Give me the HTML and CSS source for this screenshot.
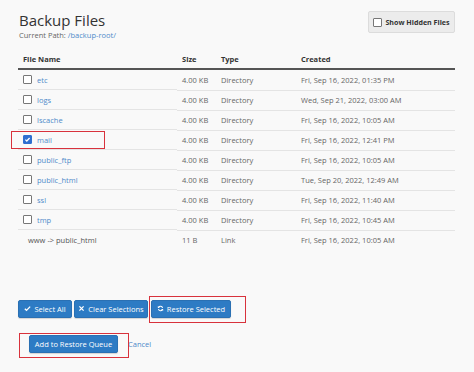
FILE: index.html
```html
<!DOCTYPE html>
<html lang="en">
<head>
    <meta charset="UTF-8">
    <title>Backup Files</title>
    <link rel="stylesheet" href="styles.css">
</head>
<body>
    <div class="page">
        <div class="top">
            <div>
                <h1>Backup Files</h1>
                <p class="path">Current Path: <a href="#">/backup-root/</a></p>
            </div>
            <button class="btn-hidden"><span class="cb"></span>Show Hidden Files</button>
        </div>

        <table class="files">
            <thead>
                <tr>
                    <th class="c-name">File Name</th>
                    <th class="c-size">Size</th>
                    <th class="c-type">Type</th>
                    <th class="c-date">Created</th>
                </tr>
            </thead>
            <tbody>
                <tr><td><span class="cb"></span><a href="#">etc</a></td><td>4.00 KB</td><td>Directory</td><td>Fri, Sep 16, 2022, 01:35 PM</td></tr>
                <tr><td><span class="cb"></span><a href="#">logs</a></td><td>4.00 KB</td><td>Directory</td><td>Wed, Sep 21, 2022, 03:00 AM</td></tr>
                <tr><td><span class="cb"></span><a href="#">lscache</a></td><td>4.00 KB</td><td>Directory</td><td>Fri, Sep 16, 2022, 10:05 AM</td></tr>
                <tr><td><span class="cb checked"><svg viewBox="0 0 10 10"><path d="M2 5.2l2 2 4-4.4" fill="none" stroke="#fff" stroke-width="1.8"/></svg></span><a href="#">mail</a></td><td>4.00 KB</td><td>Directory</td><td>Fri, Sep 16, 2022, 12:41 PM</td></tr>
                <tr><td><span class="cb"></span><a href="#">public_ftp</a></td><td>4.00 KB</td><td>Directory</td><td>Fri, Sep 16, 2022, 10:05 AM</td></tr>
                <tr><td><span class="cb"></span><a href="#">public_html</a></td><td>4.00 KB</td><td>Directory</td><td>Tue, Sep 20, 2022, 12:49 AM</td></tr>
                <tr><td><span class="cb"></span><a href="#">ssl</a></td><td>4.00 KB</td><td>Directory</td><td>Fri, Sep 16, 2022, 11:40 AM</td></tr>
                <tr><td><span class="cb"></span><a href="#">tmp</a></td><td>4.00 KB</td><td>Directory</td><td>Fri, Sep 16, 2022, 10:45 AM</td></tr>
                <tr class="link-row"><td><span class="link-name">www -&gt; public_html</span></td><td>11 B</td><td>Link</td><td>Fri, Sep 16, 2022, 10:05 AM</td></tr>
            </tbody>
        </table>

        <div class="actions">
            <button class="btn btn-all"><svg class="ico" viewBox="0 0 10 10"><path d="M1.2 5.3l2.4 2.4 5.2-5.4" fill="none" stroke="#fff" stroke-width="1.9"/></svg>Select All</button>
            <button class="btn btn-clear"><svg class="ico" viewBox="0 0 10 10"><path d="M2 2l6 6M8 2l-6 6" fill="none" stroke="#fff" stroke-width="1.9"/></svg>Clear Selections</button>
            <button class="btn btn-restore"><svg class="ico" viewBox="0 0 10 10"><path d="M8 4.2A3.2 3.2 0 0 0 2.2 3.4M2 5.8a3.2 3.2 0 0 0 5.8.8" fill="none" stroke="#fff" stroke-width="1.5"/><path d="M1.2 1.4v2.8h2.8zM8.8 8.6V5.8H6z" fill="#fff"/></svg>Restore Selected</button>
        </div>

        <div class="queue">
            <button class="btn btn-queue">Add to Restore Queue</button>
            <a href="#" class="cancel">Cancel</a>
        </div>

        <span class="mark mark-mail"></span>
        <span class="mark mark-restore"></span>
        <span class="mark mark-queue"></span>
    </div>
</body>
</html>
```

FILE: styles.css
```css
body {
    margin: 0;
    background: #f9f9f9;
    font-family: "Open Sans", Arial, sans-serif;
    font-size: 7.5px;
    color: #5a5a5a;
}

a {
    color: #4f8bc9;
    text-decoration: none;
}

.page {
    position: relative;
    padding: 10px 19px 14px 18px;
}

.top {
    display: flex;
    justify-content: space-between;
    align-items: flex-start;
}

h1 {
    margin: 0 0 0 1px;
    font-size: 15px;
    font-weight: 400;
    line-height: 20px;
    color: #333;
}

.path {
    margin: 0 0 0 1px;
    line-height: 10px;
    color: #666;
}

.btn-hidden {
    margin-top: 1px;
    height: 22px;
    width: 87px;
    padding: 0 3px;
    display: flex;
    align-items: center;
    justify-content: center;
    gap: 3px;
    background: #ececec;
    border: 1px solid #dcdcdc;
    border-radius: 2px;
    font-family: inherit;
    font-size: 7.1px;
    font-weight: 700;
    color: #333;
    white-space: nowrap;
}

.cb {
    display: inline-flex;
    width: 7px;
    height: 7px;
    border: 1px solid #777;
    border-radius: 1px;
    background: #fff;
    box-sizing: content-box;
    flex-shrink: 0;
}

.cb.checked {
    background: #2f6fd0;
    border-color: #2f6fd0;
}

.cb svg {
    width: 7px;
    height: 7px;
}

.files {
    margin-top: 10px;
    width: 437px;
    border-collapse: collapse;
    table-layout: fixed;
}

.files th {
    text-align: left;
    font-weight: 700;
    color: #333;
    height: 18px;
    padding: 0 5px;
    border-bottom: 2px solid #555;
}

.c-name { width: 149px; }
.c-size { width: 29px; }
.c-type { width: 70px; }

.files td {
    height: 19px;
    padding: 0 5px;
    border-bottom: 1px solid #e4e4e4;
    color: #666;
    white-space: nowrap;
}

.files td:first-child {
    display: flex;
    align-items: center;
    gap: 5px;
    height: 19px;
}

.files tr.link-row td {
    border-bottom: none;
}

.link-name {
    padding-left: 5px;
    color: #555;
}

.actions {
    margin-top: 50px;
    display: flex;
    gap: 2px;
}

.btn {
    height: 18px;
    padding: 0;
    display: inline-flex;
    align-items: center;
    justify-content: center;
    gap: 3px;
    background: #2d7bc4;
    border: 1px solid #2a70b3;
    border-radius: 2px;
    box-shadow: 0 1px 1px rgba(0, 0, 0, 0.15);
    color: #fff;
    font-family: inherit;
    font-size: 7.5px;
    white-space: nowrap;
}

.btn-all { width: 54px; }
.btn-clear { width: 74px; }
.btn-restore { width: 80px; margin-left: 1px; }
.btn-queue { width: 89px; }

.ico {
    width: 7px;
    height: 7px;
}

.queue {
    margin-top: 17px;
    padding-left: 11px;
    display: flex;
    align-items: center;
    gap: 10px;
}

.mark {
    position: absolute;
    border: 1.5px solid #d8323c;
    box-sizing: border-box;
}

.mark-mail { left: 11px; top: 131px; width: 94px; height: 18px; }
.mark-restore { left: 149px; top: 296px; width: 97px; height: 27px; }
.mark-queue { left: 19px; top: 333px; width: 110px; height: 25px; }
```
